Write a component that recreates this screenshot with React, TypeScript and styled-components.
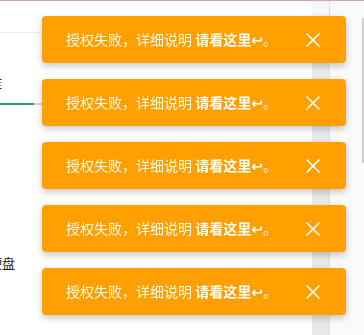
import React from 'react';
import styled, { createGlobalStyle } from 'styled-components';
import { X } from 'lucide-react';

const GlobalStyle = createGlobalStyle`
  html, body {
    margin: 0;
    padding: 0;
    background: #ffffff;
  }
  body {
    font-family: "Noto Sans CJK SC", "Noto Sans", sans-serif;
    color: #333;
  }
`;

const notifications = [1, 2, 3, 4, 5].map((id) => ({
  id,
  message: '授权失败，详细说明',
  link: '请看这里',
}));

const App: React.FC = () => {
  return (
    <>
      <GlobalStyle />
      <Page>
        <Main>
          <TopBar />
          <Body>
            <SideLabel>库</SideLabel>
            <Tabs>
              <ActiveTab />
            </Tabs>
            <SideLabel $top={149}>硬盘</SideLabel>
          </Body>
        </Main>
        <Gutter>
          <Track />
        </Gutter>
        <Panel />
        <ScrollBar>
          <Thumb />
        </ScrollBar>
      </Page>

      <Container>
        {notifications.map((n) => (
          <NotificationCard key={n.id}>
            <Content>
              {n.message} <Link>{n.link}</Link>
              <Arrow>↩</Arrow>。
            </Content>
            <CloseButton>
              <X size={24} strokeWidth={1.6} />
            </CloseButton>
          </NotificationCard>
        ))}
      </Container>
    </>
  );
};

const Page = styled.div`
  width: 364px;
  height: 334px;
  border-top: 1px solid #d3a2b3;
  display: flex;
  overflow: hidden;
  background: #ffffff;
`;

const Main = styled.div`
  width: 312px;
  display: flex;
  flex-direction: column;
  background: #ffffff;
`;

const TopBar = styled.div`
  height: 31px;
  border-bottom: 1px solid #ececec;
`;

const Body = styled.div`
  flex: 1;
  display: flex;
  flex-direction: column;
`;

const SideLabel = styled.div<{ $top?: number }>`
  margin-top: ${({ $top }) => ($top ? $top : 42)}px;
  margin-left: -11px;
  font-size: 13px;
  line-height: 18px;
  color: #222;
  white-space: nowrap;
`;

const Tabs = styled.div`
  margin-top: 10px;
  height: 2px;
  background: #d8d8d8;
  display: flex;
`;

const ActiveTab = styled.div`
  width: 34px;
  height: 2px;
  background: #2a9a88;
`;

const Gutter = styled.div`
  width: 17px;
  display: flex;
  flex-direction: column;
  background: #f7f7f7;
  border-right: 1px solid #e0e0e0;
`;

const Track = styled.div`
  margin-top: 62px;
  flex: 1;
  background: #e9e9e9;
`;

const Panel = styled.div`
  flex: 1;
  background: #fafafa;
`;

const ScrollBar = styled.div`
  width: 2px;
  background: #fafafa;
`;

const Thumb = styled.div`
  margin-top: 17px;
  height: 145px;
  background: #cfcfcf;
`;

const Container = styled.div`
  position: fixed;
  top: 16px;
  right: 18px;
  width: 304px;
  display: flex;
  flex-direction: column;
  gap: 16px;
  z-index: 10;
`;

const NotificationCard = styled.div`
  height: 47px;
  display: flex;
  align-items: center;
  justify-content: space-between;
  padding: 0 21px 0 24px;
  box-sizing: border-box;
  background: #ffa000;
  border-radius: 4px;
  box-shadow: 0 3px 7px rgba(0, 0, 0, 0.22);
  color: #fffaf0;
`;

const Content = styled.div`
  font-size: 14px;
  line-height: 20px;
  white-space: nowrap;
`;

const Link = styled.span`
  font-weight: 700;
  color: #ffffff;
`;

const Arrow = styled.span`
  font-family: "DejaVu Sans", sans-serif;
  font-size: 14px;
  font-weight: 700;
  color: #ffffff;
`;

const CloseButton = styled.button`
  background: none;
  border: none;
  padding: 0;
  color: #ffffff;
  display: flex;
  cursor: pointer;
`;

export default App;
